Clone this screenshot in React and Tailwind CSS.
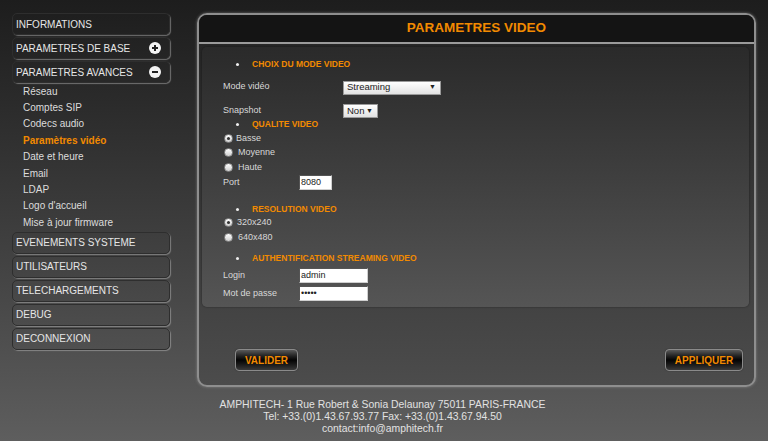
import React from "react";

const font = "font-['Liberation_Sans',Arial,sans-serif]";

function MenuButton({ label, icon }) {
  return (
    <div className="flex h-[22px] items-center justify-between rounded-[5px] border border-[#2e2e2e] pl-[3px] pr-[8px] text-[10px] text-[#e6e6e6] shadow-[1px_1px_1px_rgba(200,200,200,0.45)]">
      <span>{label}</span>
      {icon && (
        <svg width="12" height="12" viewBox="0 0 12 12">
          <circle cx="6" cy="6" r="6" fill="#f4f4f4" />
          <path d="M3 6h6" stroke="#222" strokeWidth="2" />
          {icon === "plus" && <path d="M6 3v6" stroke="#222" strokeWidth="2" />}
        </svg>
      )}
    </div>
  );
}

function Heading({ children, className = "" }) {
  return (
    <div className={"flex items-center " + className}>
      <span className="ml-[34px] h-[3px] w-[3px] rounded-full bg-[#eee]" />
      <span className="ml-[13px] text-[8.5px] font-bold text-[#f28a00]">{children}</span>
    </div>
  );
}

function Radio({ checked, label, gap = "ml-[3px]", className = "" }) {
  return (
    <div className={"flex items-center pl-[22px] " + className}>
      <span className="flex h-[9px] w-[9px] items-center justify-center rounded-full border border-[#8a8a8a] bg-gradient-to-b from-[#ffffff] to-[#cfcfcf]">
        {checked && <span className="h-[3px] w-[3px] rounded-full bg-[#333]" />}
      </span>
      <span className={gap + " text-[9px] text-[#d8d8d8]"}>{label}</span>
    </div>
  );
}

function TextBox({ value, w }) {
  return (
    <div className={"flex h-[15px] items-center border border-[#cfcfcf] border-l-[#555] border-t-[#555] bg-white pl-[1px] text-[9px] text-[#222] " + w}>
      {value}
    </div>
  );
}

function Select({ value, w }) {
  return (
    <div className={"flex h-[14px] items-center justify-between border border-[#9a9a9a] bg-gradient-to-b from-[#ffffff] to-[#e2e2e2] pl-[3px] pr-[4px] text-[9.5px] text-[#222] " + w}>
      <span>{value}</span>
      <span className="text-[7px]">▼</span>
    </div>
  );
}

function GlossButton({ label, w }) {
  return (
    <div className={"flex h-[22px] items-center justify-center rounded-[4px] border border-[#8a8a8a] bg-gradient-to-b from-[#5a5a5a] via-[#050505] to-[#3a3a3a] text-[10px] font-bold text-[#f28a00] shadow-[0_0_1px_rgba(0,0,0,0.6)] " + w}>
      {label}
    </div>
  );
}

export default function App() {
  const sub = [
    "Réseau",
    "Comptes SIP",
    "Codecs audio",
    "Paramètres vidéo",
    "Date et heure",
    "Email",
    "LDAP",
    "Logo d'accueil",
    "Mise à jour firmware",
  ];
  return (
    <div className={"flex h-[441px] w-[768px] flex-col overflow-hidden bg-gradient-to-b from-[#1d1d1d] to-[#5e5e5e] " + font}>
      <div className="flex pt-[13px]">
        {/* Sidebar */}
        <div className="ml-[12px] flex w-[158px] flex-col">
          <div className="flex flex-col gap-[2px]">
            <MenuButton label="INFORMATIONS" />
            <MenuButton label="PARAMETRES DE BASE" icon="plus" />
            <MenuButton label="PARAMETRES AVANCES" icon="minus" />
          </div>
          <div className="mb-[1px] flex flex-col pl-[11px]">
            {sub.map((s) => (
              <div
                key={s}
                className={
                  "flex h-[16.4px] items-center text-[10px] " +
                  (s === "Paramètres vidéo" ? "font-bold text-[#f28a00]" : "text-[#dcdcdc]")
                }
              >
                {s}
              </div>
            ))}
          </div>
          <div className="flex flex-col gap-[2px]">
            <MenuButton label="EVENEMENTS SYSTEME" />
            <MenuButton label="UTILISATEURS" />
            <MenuButton label="TELECHARGEMENTS" />
            <MenuButton label="DEBUG" />
            <MenuButton label="DECONNEXION" />
          </div>
        </div>

        {/* Main panel */}
        <div className="ml-[27px] flex h-[374px] w-[559px] flex-col overflow-hidden rounded-[10px] border-2 border-[#8e8e8e] bg-gradient-to-b from-[#232323] to-[#4c4c4c] shadow-[0_0_3px_rgba(160,160,160,0.6)]">
          <div className="flex h-[27px] items-center justify-center bg-[#141414] text-[13.5px] font-bold text-[#f28a00]">
            PARAMETRES VIDEO
          </div>
          <div className="h-[2px] bg-[#9a9a9a]" />
          <div className="mx-[3px] mr-[5px] mt-[3px] flex flex-col rounded-[5px] bg-gradient-to-b from-[#2a2a2a] to-[#555555] pb-[6px] pt-[10px] shadow-[0_0_2px_rgba(0,0,0,0.5)]">
            <Heading className="h-[14px]">CHOIX DU MODE VIDEO</Heading>
            <div className="mt-[9px] flex h-[15px] items-center pl-[21px]">
              <span className="w-[120px] -translate-y-[1px] text-[9px] text-[#d8d8d8]">Mode vidéo</span>
              <Select value="Streaming" w="w-[98px]" />
            </div>
            <div className="mt-[9px] flex h-[14px] items-center pl-[21px]">
              <span className="w-[120px] text-[9px] text-[#d8d8d8]">Snapshot</span>
              <Select value="Non" w="w-[35px]" />
            </div>
            <Heading className="h-[13px]">QUALITE VIDEO</Heading>
            <Radio checked label="Basse" className="h-[14.5px]" />
            <Radio label="Moyenne" gap="ml-[5px]" className="h-[14.5px]" />
            <Radio label="Haute" gap="ml-[5px]" className="h-[14.5px]" />
            <div className="mt-[0.5px] flex h-[15px] items-center pl-[21px]">
              <span className="w-[76px] text-[9px] text-[#d8d8d8]">Port</span>
              <TextBox value="8080" w="w-[33px]" />
            </div>
            <Heading className="mt-[13.5px] h-[12px]">RESOLUTION VIDEO</Heading>
            <Radio checked label="320x240" gap="ml-[4px]" className="h-[14.5px]" />
            <Radio label="640x480" gap="ml-[5px]" className="h-[14.5px]" />
            <Heading className="mt-[8px] h-[12px]">AUTHENTIFICATION STREAMING VIDEO</Heading>
            <div className="mt-[3.5px] flex h-[15px] items-center pl-[21px]">
              <span className="w-[76px] text-[9px] text-[#d8d8d8]">Login</span>
              <TextBox value="admin" w="w-[69px]" />
            </div>
            <div className="mt-[3px] flex h-[15px] items-center pl-[21px]">
              <span className="w-[76px] text-[9px] text-[#d8d8d8]">Mot de passe</span>
              <TextBox value="•••••" w="w-[69px]" />
            </div>
          </div>
          <div className="mt-[42px] flex justify-between pl-[36px] pr-[11px]">
            <GlossButton label="VALIDER" w="w-[63px]" />
            <GlossButton label="APPLIQUER" w="w-[78px]" />
          </div>
        </div>
      </div>

      {/* Footer */}
      <div className="mt-[12px] flex flex-col items-center pr-[3px] text-[10.4px] leading-[12px] text-[#e2e2e2]">
        <div>AMPHITECH- 1 Rue Robert &amp; Sonia Delaunay 75011 PARIS-FRANCE</div>
        <div>Tel: +33.(0)1.43.67.93.77 Fax: +33.(0)1.43.67.94.50</div>
        <div>contact:info@amphitech.fr</div>
      </div>
    </div>
  );
}
